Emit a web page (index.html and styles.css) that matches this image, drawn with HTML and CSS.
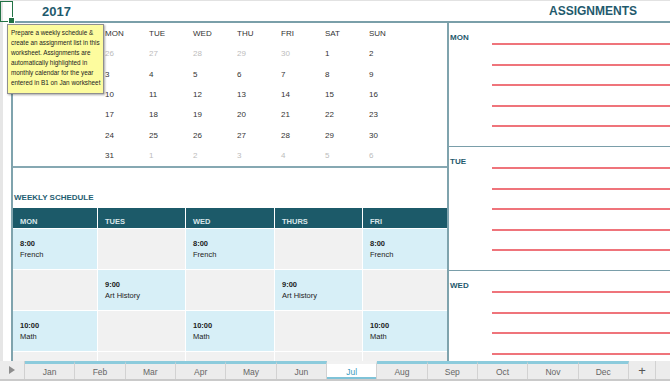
FILE: index.html
```html
<!DOCTYPE html>
<html lang="en">
<head>
  <meta charset="UTF-8">
  <title>Weekly Schedule - Jul</title>
  <link rel="stylesheet" href="styles.css">
</head>
<body>
  <div class="top-strip"></div>

  <div class="sheet">
    <div class="gutter"></div>
    <div class="head head-left">2017</div>
    <div class="head head-right">ASSIGNMENTS</div>

    <!-- month calendar + weekly schedule -->
    <div class="left">
      <div class="calendar">
        <span>MON</span><span>TUE</span><span>WED</span><span>THU</span><span>FRI</span><span>SAT</span><span>SUN</span>
        <span class="muted">26</span><span class="muted">27</span><span class="muted">28</span><span class="muted">29</span><span class="muted">30</span><span>1</span><span>2</span>
        <span>3</span><span>4</span><span>5</span><span>6</span><span>7</span><span>8</span><span>9</span>
        <span>10</span><span>11</span><span>12</span><span>13</span><span>14</span><span>15</span><span>16</span>
        <span>17</span><span>18</span><span>19</span><span>20</span><span>21</span><span>22</span><span>23</span>
        <span>24</span><span>25</span><span>26</span><span>27</span><span>28</span><span>29</span><span>30</span>
        <span>31</span><span class="muted">1</span><span class="muted">2</span><span class="muted">3</span><span class="muted">4</span><span class="muted">5</span><span class="muted">6</span>
      </div>

      <div class="schedule">
        <div class="schedule-title">WEEKLY SCHEDULE</div>
        <div class="schedule-grid">
          <div class="col-head">MON</div>
          <div class="col-head">TUES</div>
          <div class="col-head">WED</div>
          <div class="col-head">THURS</div>
          <div class="col-head">FRI</div>

          <div class="slot slot-on"><b>8:00</b>French</div>
          <div class="slot"></div>
          <div class="slot slot-on"><b>8:00</b>French</div>
          <div class="slot"></div>
          <div class="slot slot-on"><b>8:00</b>French</div>

          <div class="slot"></div>
          <div class="slot slot-on"><b>9:00</b>Art History</div>
          <div class="slot"></div>
          <div class="slot slot-on"><b>9:00</b>Art History</div>
          <div class="slot"></div>

          <div class="slot slot-on"><b>10:00</b>Math</div>
          <div class="slot"></div>
          <div class="slot slot-on"><b>10:00</b>Math</div>
          <div class="slot"></div>
          <div class="slot slot-on"><b>10:00</b>Math</div>

          <div class="slot"></div>
          <div class="slot"></div>
          <div class="slot"></div>
          <div class="slot"></div>
          <div class="slot"></div>
        </div>
      </div>
    </div>

    <!-- assignments list -->
    <div class="right">
      <div class="day-block">
        <div class="day-label">MON</div>
        <div class="line"></div><div class="line"></div><div class="line"></div><div class="line"></div><div class="line"></div>
      </div>
      <div class="day-block">
        <div class="day-label">TUE</div>
        <div class="line"></div><div class="line"></div><div class="line"></div><div class="line"></div><div class="line"></div>
      </div>
      <div class="day-block">
        <div class="day-label">WED</div>
        <div class="line"></div><div class="line"></div><div class="line"></div><div class="line"></div><div class="line"></div>
      </div>
    </div>
  </div>

  <!-- sheet tabs -->
  <nav class="tabs">
    <div class="tab-arrow">
      <svg width="6" height="8" viewBox="0 0 6 8"><path d="M0 0 L6 4 L0 8 Z" fill="#8d8d8d"/></svg>
    </div>
    <div class="tab">Jan</div>
    <div class="tab">Feb</div>
    <div class="tab">Mar</div>
    <div class="tab">Apr</div>
    <div class="tab">May</div>
    <div class="tab">Jun</div>
    <div class="tab active">Jul</div>
    <div class="tab">Aug</div>
    <div class="tab">Sep</div>
    <div class="tab">Oct</div>
    <div class="tab">Nov</div>
    <div class="tab">Dec</div>
    <div class="tab-add">+</div>
  </nav>

  <!-- selected cell A1 and its comment -->
  <div class="cell-select"></div>
  <div class="note">
    <p>
      Prepare a weekly schedule &amp;<br>
      create an assignment list in this<br>
      worksheet. Assignments are<br>
      automatically highlighted in<br>
      monthly calendar for the year<br>
      entered in B1 on Jan worksheet
    </p>
  </div>
</body>
</html>
```

FILE: styles.css
```css
/* base */
* {
  box-sizing: border-box;
}
body {
  margin: 0;
  width: 670px;
  height: 381px;
  overflow: hidden;
  position: relative;
  background: #fff;
  color: #333;
  font-family: "Liberation Sans", Arial, sans-serif;
}

.top-strip {
  height: 1px;
  background: #e2e2e2;
}

/* sheet layout */
.sheet {
  display: grid;
  grid-template-columns: 11px 436px 223px;
  grid-template-rows: 22px 338px;
}
.gutter {
  grid-row: 1 / 3;
  border-left: 3px solid #e6e6e6;
}
.head {
  display: flex;
  align-items: center;
  border-bottom: 2px solid #7a9fa9;
  font-weight: bold;
  color: #1f5a6d;
}
.head-left {
  padding-left: 31px;
  font-size: 13px;
}
.head-right {
  justify-content: flex-end;
  padding-right: 33px;
  font-size: 12px;
}

/* calendar */
.left {
  border-left: 2px solid #7fa3ad;
  display: flex;
  flex-direction: column;
}
.calendar {
  height: 145px;
  border-bottom: 2px solid #86a8b2;
  padding-left: 92px;
  display: grid;
  grid-template-columns: repeat(7, 44px);
  grid-template-rows: repeat(7, 1fr);
  align-items: center;
  font-size: 8px;
}
.calendar .muted {
  color: #bcbcbc;
}

/* weekly schedule */
.schedule {
  flex: 1;
  overflow: hidden;
}
.schedule-title {
  height: 40px;
  display: flex;
  align-items: flex-end;
  padding: 0 0 5px 1px;
  font-size: 8px;
  line-height: 10px;
  font-weight: bold;
  color: #1f5e72;
}
.schedule-grid {
  display: grid;
  grid-template-columns: 84px 87px 88px 87px 84px;
  grid-template-rows: 20px repeat(4, 40px);
  gap: 1px;
}
.col-head {
  display: flex;
  align-items: flex-end;
  padding: 0 0 1px 7px;
  background: #1c5a69;
  color: #d9e6ea;
  font-size: 7.5px;
  line-height: 10px;
  font-weight: bold;
}
.slot {
  background: #f1f1f1;
  padding: 10px 0 0 7px;
  font-size: 7.5px;
  line-height: 10.5px;
  color: #222;
}
.slot-on {
  background: #d7eff7;
}
.slot b {
  display: block;
}

/* assignments */
.right {
  border-left: 2px solid #7fa3ad;
  overflow: hidden;
}
.day-block {
  height: 124px;
  border-bottom: 1px solid #7a9eaa;
}
.day-label {
  height: 20px;
  padding: 10px 0 0 1px;
  font-size: 8px;
  line-height: 10px;
  font-weight: bold;
  color: #1f5a6d;
}
.line {
  height: 20.6px;
  margin-left: 43px;
  border-top: 2px solid #ef747b;
}

/* sheet tabs */
.tabs {
  display: flex;
  height: 20px;
  background: #ececec;
  border-bottom: 2px solid #cacaca;
  font-size: 8.5px;
  color: #666;
}
.tab-arrow {
  width: 25px;
  border-right: 1px solid #d0d0d0;
  display: flex;
  align-items: center;
  justify-content: center;
}
.tab {
  width: 50.33px;
  border-top: 3px solid #8ccbdc;
  border-right: 1px solid #d2d2d2;
  display: flex;
  align-items: center;
  justify-content: center;
}
.tab.active {
  background: #fff;
  color: #3b9cc0;
  border-top-color: #f2f2f2;
  box-shadow: inset 0 -2px #7fc3d8;
}
.tab-add {
  width: 27px;
  border-right: 1px solid #d2d2d2;
  display: flex;
  align-items: center;
  justify-content: center;
  font-size: 13px;
  color: #555;
}

/* selected cell and comment */
.cell-select {
  position: absolute;
  left: 0;
  top: 1px;
  width: 13px;
  height: 21px;
  border: 1px solid #227245;
}
.cell-select::after {
  content: "";
  position: absolute;
  right: -3px;
  bottom: -3px;
  width: 5px;
  height: 5px;
  background: #227245;
  border: 1px solid #fff;
}
.note {
  position: absolute;
  left: 7px;
  top: 24px;
  width: 97px;
  height: 70px;
  padding: 3px 0 0 3px;
  background: #fdfc9e;
  border: 1px solid #8f8f8f;
  box-shadow: 1px 1px 2px rgba(0,0,0,0.35);
  font-size: 7.4px;
  line-height: 10.1px;
  color: #222;
  white-space: nowrap;
}
/* the comment font is a narrow one; squeeze the regular face to the same width */
.note p {
  margin: 0;
  transform: scaleX(0.86);
  transform-origin: left top;
}
```
